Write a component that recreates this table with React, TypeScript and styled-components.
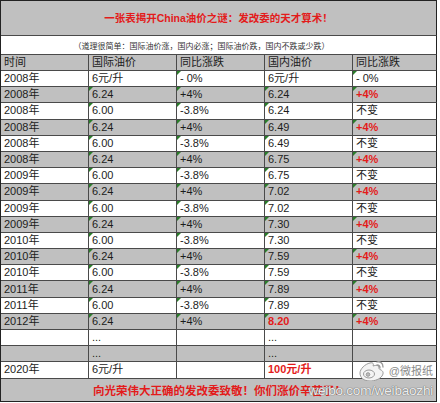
import React from "react";
import styled, { createGlobalStyle, css } from "styled-components";

const Global = createGlobalStyle`
  html, body { margin: 0; padding: 0; background: #ffffff; }
  body { font-family: "Liberation Sans", "Noto Sans CJK SC", sans-serif; }
`;

const GRAY = "#c0c0c0";
const RED = "#e31b1b";
const LINE = "#4a4a4a";

const Sheet = styled.div`
  position: relative;
  width: 437px;
  box-sizing: border-box;
  border-top: 1px solid #222;
  border-left: 1px solid #222;
  display: flex;
  flex-direction: column;
  color: #1c1c1c;
`;

const Banner = styled.div<{ $h: number; $bg: string }>`
  height: ${(p) => p.$h}px;
  box-sizing: border-box;
  background: ${(p) => p.$bg};
  border-right: 1px solid #222;
  border-bottom: 1px solid ${LINE};
  display: flex;
  align-items: center;
  justify-content: center;
`;

const Title = styled.div`
  font-size: 10.5px;
  font-weight: bold;
  color: ${RED};
  white-space: nowrap;
  padding-bottom: 1px;
`;

const Sub = styled.div`
  font-size: 8px;
  color: #333;
  white-space: nowrap;
  padding-right: 34px;
`;

const Footer = styled(Banner)`
  border-bottom: 1px solid #222;
`;

const FootText = styled.div`
  font-size: 11.5px;
  font-weight: bold;
  color: ${RED};
  white-space: nowrap;
  padding-left: 2px;
`;

const Row = styled.div<{ $h: number; $gray: boolean }>`
  display: grid;
  grid-template-columns: 88px 88px 88px 88px 1fr;
  height: ${(p) => p.$h}px;
  background: ${(p) => (p.$gray ? GRAY : "#ffffff")};
`;

const Cell = styled.div<{ $red?: boolean; $tri?: boolean; $last?: boolean }>`
  position: relative;
  box-sizing: border-box;
  border-right: 1px solid ${(p) => (p.$last ? "#222" : LINE)};
  border-bottom: 1px solid ${LINE};
  padding-left: 3px;
  font-size: 11px;
  line-height: 1;
  display: flex;
  align-items: center;
  white-space: nowrap;
  ${(p) =>
    p.$red &&
    css`
      color: ${RED};
      font-weight: bold;
    `}
  ${(p) =>
    p.$tri &&
    css`
      &::before {
        content: "";
        position: absolute;
        left: 0;
        top: 0;
        width: 0;
        height: 0;
        border-top: 4px solid #2a7d2a;
        border-right: 4px solid transparent;
      }
    `}
`;

const Mark = styled.div`
  position: absolute;
  right: 4px;
  bottom: 4px;
  display: flex;
  flex-direction: column;
  align-items: flex-end;
  gap: 2px;
  pointer-events: none;
`;

const Handle = styled.div`
  display: flex;
  align-items: center;
  gap: 2px;
  font-size: 11px;
  color: #8a8a8a;
  text-shadow: 0 0 2px #fff, 0 0 1px #fff;
`;

const Url = styled.div`
  font-size: 13.5px;
  color: rgba(255, 255, 255, 0.9);
  letter-spacing: -0.2px;
  text-shadow: 0 0 1px #666, 0 0 1px #666;
`;

type R = {
  y: string;
  a: string;
  b: string;
  c: string;
  d: string;
  ta?: boolean;
  tb?: boolean;
  tc?: boolean;
  td?: boolean;
  redC?: boolean;
  redD?: boolean;
};

const num = (y: string, a: string, b: string, c: string, d: string): R => ({
  y,
  a,
  b,
  c,
  d,
  ta: true,
  tb: true,
  tc: true,
  td: d === "+4%",
  redD: d === "+4%",
});

const rows: R[] = [
  { y: "2008年", a: "6元/升", b: "- 0%", c: "6元/升", d: "- 0%", tb: true, td: true },
  num("2008年", "6.24", "+4%", "6.24", "+4%"),
  num("2008年", "6.00", "-3.8%", "6.24", "不变"),
  num("2008年", "6.24", "+4%", "6.49", "+4%"),
  num("2008年", "6.00", "-3.8%", "6.49", "不变"),
  num("2008年", "6.24", "+4%", "6.75", "+4%"),
  num("2009年", "6.00", "-3.8%", "6.75", "不变"),
  num("2009年", "6.24", "+4%", "7.02", "+4%"),
  num("2009年", "6.00", "-3.8%", "7.02", "不变"),
  num("2009年", "6.24", "+4%", "7.30", "+4%"),
  num("2010年", "6.00", "-3.8%", "7.30", "不变"),
  num("2010年", "6.24", "+4%", "7.59", "+4%"),
  num("2010年", "6.00", "-3.8%", "7.59", "不变"),
  num("2011年", "6.24", "+4%", "7.89", "+4%"),
  num("2011年", "6.00", "-3.8%", "7.89", "不变"),
  { ...num("2012年", "6.24", "+4%", "8.20", "+4%"), redC: true },
  { y: "", a: "...", b: "", c: "...", d: "" },
  { y: "", a: "...", b: "", c: "...", d: "" },
  { y: "2020年", a: "6元/升", b: "", c: "100元/升", d: "", redC: true },
];

const WeiboLogo = () => (
  <svg width="30" height="22" viewBox="0 0 30 22">
    <g fill="#f4f4f4" stroke="#9a9a9a" strokeWidth="1">
      <path d="M3 14c0-4 5-9 10-10 3-1 4 1 3 3 3-1 6-1 6 2 0 1 0 1 2 2 2 1 3 3 1 6-2 3-7 5-12 5-6 0-10-3-10-8z" />
      <ellipse cx="12" cy="15" rx="5.5" ry="4" />
      <circle cx="11" cy="15.5" r="1.8" fill="#bbb" />
    </g>
    <g fill="none" stroke="#9a9a9a" strokeWidth="1.3" strokeLinecap="round">
      <path d="M20 3c3-1 6 1 6 5" />
      <path d="M20 6c1.5 0 3 1 3 3" />
    </g>
  </svg>
);

export default function App() {
  return (
    <>
      <Global />
      <Sheet>
        <Banner $h={35} $bg={GRAY}>
          <Title>一张表揭开China油价之谜：发改委的天才算术！</Title>
        </Banner>
        <Banner $h={19} $bg="#ffffff">
          <Sub>（道理很简单：国际油价涨，国内必涨；国际油价跌，国内不跌或少跌）</Sub>
        </Banner>
        <Row $h={16} $gray={true}>
          <Cell>时间</Cell>
          <Cell>国际油价</Cell>
          <Cell>同比涨跌</Cell>
          <Cell>国内油价</Cell>
          <Cell $last>同比涨跌</Cell>
        </Row>
        {rows.map((r, i) => (
          <Row key={i} $h={16.2} $gray={i % 2 === 1}>
            <Cell>{r.y}</Cell>
            <Cell $tri={r.ta}>{r.a}</Cell>
            <Cell $tri={r.tb}>{r.b}</Cell>
            <Cell $tri={r.tc} $red={r.redC}>
              {r.c}
            </Cell>
            <Cell $tri={r.td} $red={r.redD} $last>
              {r.d}
            </Cell>
          </Row>
        ))}
        <Footer $h={23} $bg={GRAY}>
          <FootText>向光荣伟大正确的发改委致敬！你们涨价辛苦了！</FootText>
        </Footer>
        <Mark>
          <Handle>
            <WeiboLogo />
            <span>@微报纸</span>
          </Handle>
          <Url>weibo.com/weibaozhi</Url>
        </Mark>
      </Sheet>
    </>
  );
}
